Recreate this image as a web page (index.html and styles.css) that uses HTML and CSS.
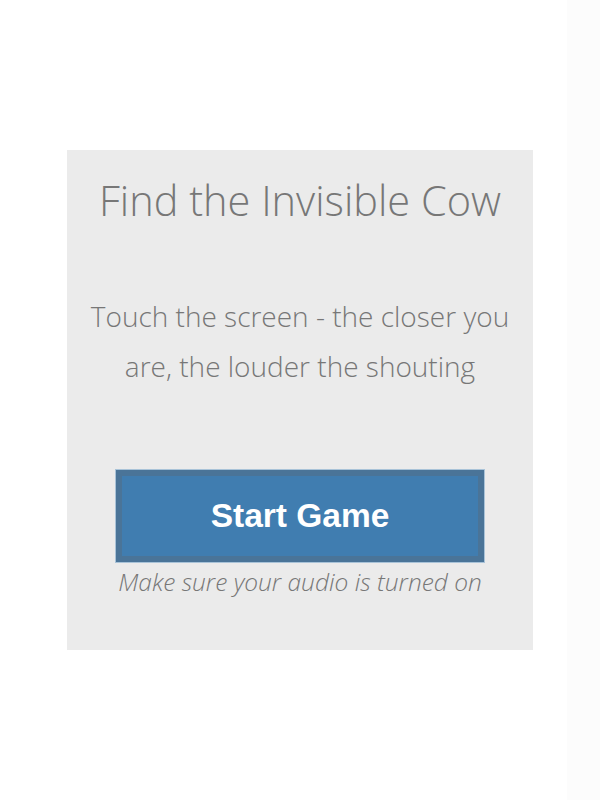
FILE: index.html
```html
<!DOCTYPE html>
<html lang="en">

<head>
    <meta charset="UTF-8">
    <meta name="viewport" content="width=device-width, initial-scale=1.0">
    <title>Find the Invisible Cow</title>
    <link rel="stylesheet" href="styles.css">
</head>

<body>
    <div class="panel">
        <h1>Find the Invisible Cow</h1>
        <p class="intro">Touch the screen - the closer you are, the louder the shouting</p>
        <button class="start" type="button">Start Game</button>
        <p class="note">Make sure your audio is turned on</p>
    </div>
</body>

</html>
```

FILE: styles.css
```css
body {
    margin: 0;
    min-height: 800px;
    font-family: "Open Sans", sans-serif;
    font-weight: 300;
    color: #777777;
    background: linear-gradient(to right, #ffffff 567px, #fcfcfc 567px);
    display: flex;
    align-items: flex-start;
    justify-content: center;
}

.panel {
    width: 466px;
    height: 500px;
    margin-top: 150px;
    background-color: #ebebeb;
    box-sizing: border-box;
    padding-top: 179px;
    display: flex;
    flex-direction: column;
    align-items: center;
    text-align: center;
    position: relative;
}

h1 {
    position: absolute;
    top: 25px;
    left: 0;
    right: 0;
    margin: 0;
    font-size: 41.5px;
    font-weight: 300;
    line-height: 50px;
}

.intro {
    margin: -38px 0 0;
    padding: 0 18px;
    font-size: 28px;
    line-height: 50px;
}

.start {
    margin-top: 79px;
    width: 368px;
    height: 92px;
    background-color: #407db0;
    border: 6px solid #4a7498;
    outline: 1px solid #a9c3d8;
    color: #ffffff;
    font-family: "Liberation Sans", Arial, sans-serif;
    font-weight: bold;
    font-size: 33.5px;
    cursor: pointer;
}

.note {
    margin: 3px 0 0;
    font-size: 24.5px;
    font-style: italic;
    line-height: 34px;
}
```
